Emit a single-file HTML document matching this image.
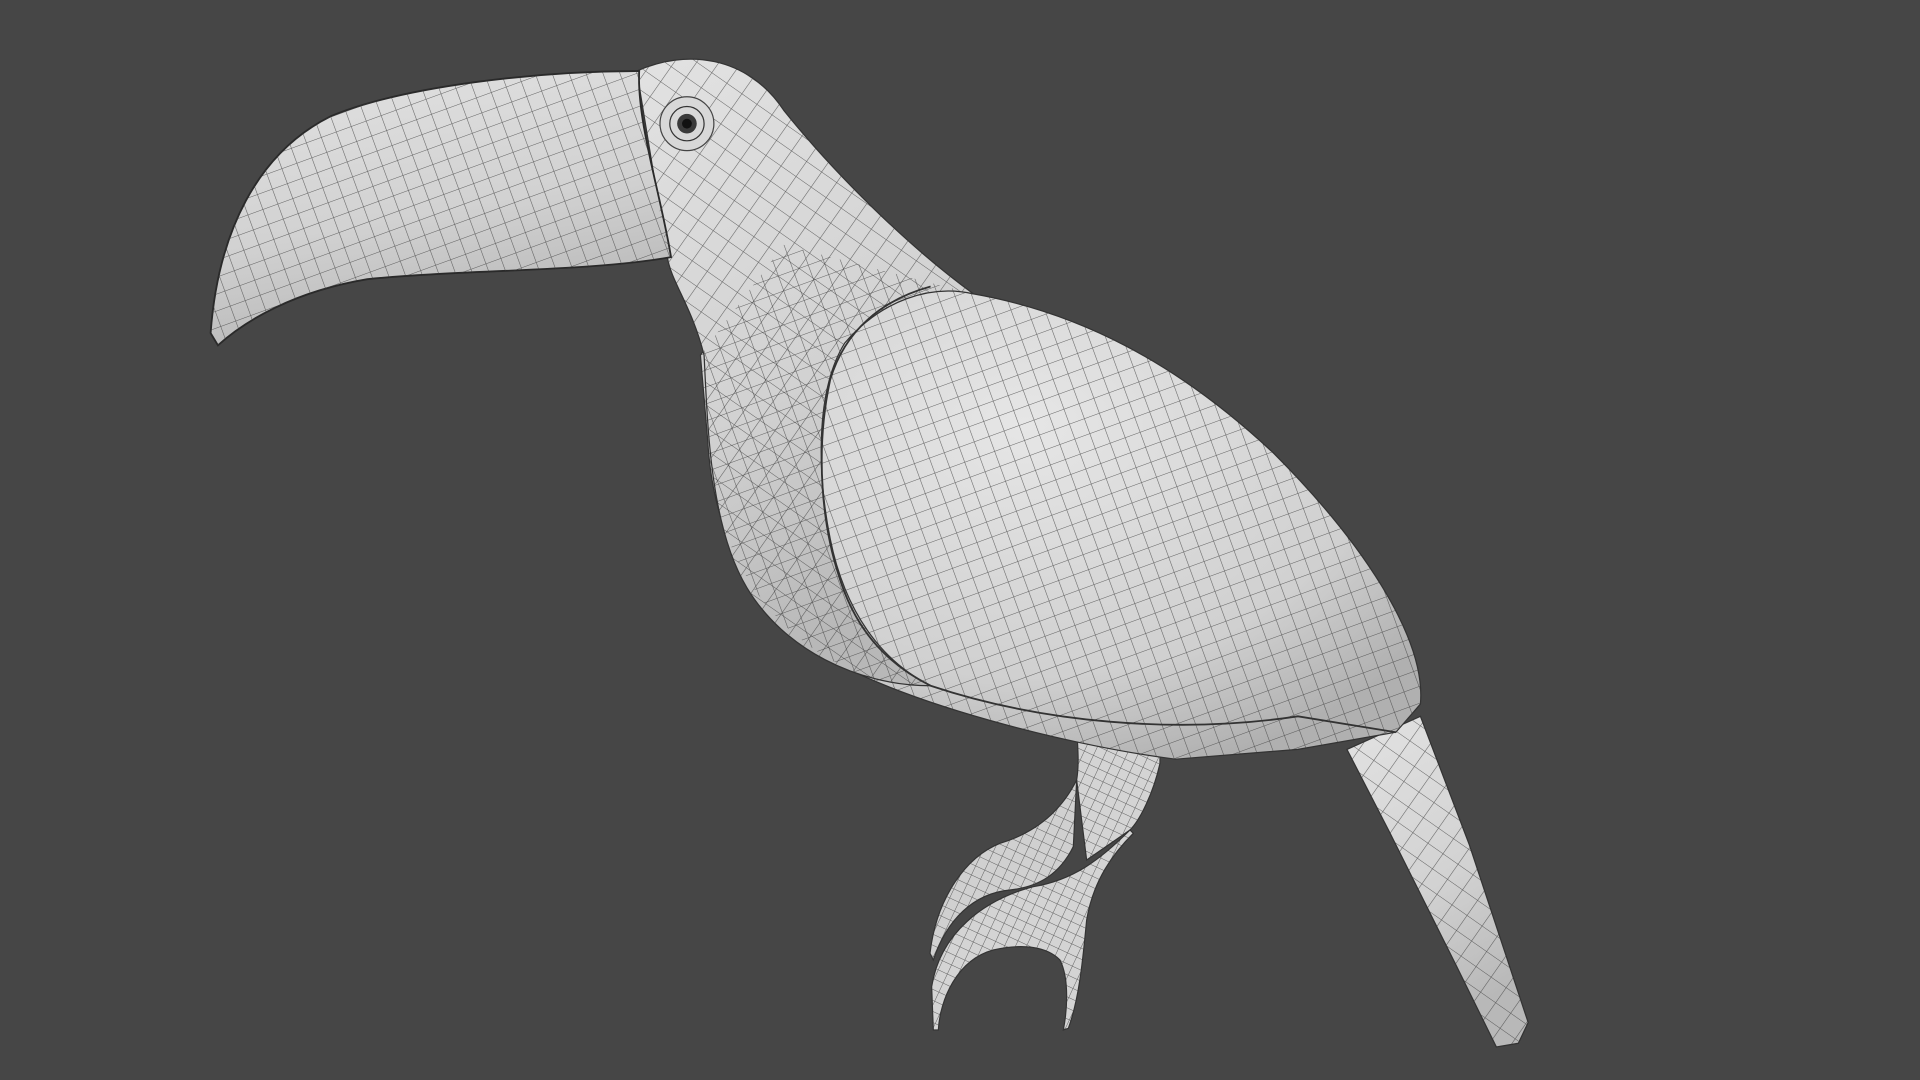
<!DOCTYPE html>
<html><head><meta charset="utf-8"><style>
html,body{margin:0;padding:0;background:#464646;overflow:hidden}
svg{display:block}
</style></head><body>
<svg width="1920" height="1080" viewBox="0 0 1568 882" preserveAspectRatio="none" xmlns="http://www.w3.org/2000/svg">
<defs>
<pattern id="g" width="13" height="13" patternUnits="userSpaceOnUse" patternTransform="rotate(-20)">
<path d="M0 0H13M0 0V13" stroke="#3a3a3a" stroke-width="0.9" fill="none" opacity="0.75"/>
</pattern>
<pattern id="g2" width="15" height="15" patternUnits="userSpaceOnUse" patternTransform="rotate(35)">
<path d="M0 0H15M0 0V15" stroke="#3a3a3a" stroke-width="0.9" fill="none" opacity="0.75"/>
</pattern>
<pattern id="gf" width="30" height="30" patternUnits="userSpaceOnUse" patternTransform="rotate(25)">
<path d="M0 0H30M0 0V30" stroke="#3a3a3a" stroke-width="3" fill="none" opacity="0.75"/>
</pattern>
<linearGradient id="sh" x1="0" y1="0" x2="0.3" y2="1">
<stop offset="0" stop-color="#e2e2e2"/><stop offset="0.6" stop-color="#d2d2d2"/><stop offset="1" stop-color="#b8b8b8"/>
</linearGradient>
<radialGradient id="bs" cx="0.45" cy="0.35" r="0.7">
<stop offset="0" stop-color="#e6e6e6"/><stop offset="0.7" stop-color="#d0d0d0"/><stop offset="1" stop-color="#b0b0b0"/>
</radialGradient>
</defs>
<rect width="1568" height="882" fill="#464646"/>
<!-- tail -->
<path d="M1100 612 L1160 585 L1200 690 L1248 835 L1240 852 L1222 855 L1190 790 L1135 680 Z" fill="url(#sh)" stroke="#333" stroke-width="1"/>
<path d="M1100 612 L1160 585 L1200 690 L1248 835 L1240 852 L1222 855 L1190 790 L1135 680 Z" fill="url(#g2)"/>
<!-- foot -->
<g transform="translate(735,588) scale(0.2722)" stroke="#333" stroke-width="3.5">
<path d="M530 0 L780 0 L780 130 C760 220 720 300 690 330 L560 420 L530 180 C540 120 530 60 530 0 Z" fill="#d4d4d4"/>
<path d="M530 180 C480 280 400 340 300 370 C200 410 110 530 90 700 L100 720 C140 600 220 520 330 510 C420 500 480 460 520 380 Z" fill="#d0d0d0"/>
<path d="M690 330 C600 420 520 480 400 500 C250 540 120 640 95 800 L100 930 L115 930 C120 840 170 720 280 690 C370 670 440 680 480 720 C510 780 500 880 490 930 L505 925 C540 830 550 700 560 600 C580 480 640 400 700 340 Z" fill="#d4d4d4"/>
<g stroke="none" fill="url(#gf)">
<path d="M530 0 L780 0 L780 130 C760 220 720 300 690 330 L560 420 L530 180 C540 120 530 60 530 0 Z"/>
<path d="M530 180 C480 280 400 340 300 370 C200 410 110 530 90 700 L100 720 C140 600 220 520 330 510 C420 500 480 460 520 380 Z"/>
<path d="M690 330 C600 420 520 480 400 500 C250 540 120 640 95 800 L100 930 L115 930 C120 840 170 720 280 690 C370 670 440 680 480 720 C510 780 500 880 490 930 L505 925 C540 830 550 700 560 600 C580 480 640 400 700 340 Z"/>
</g>
</g>
<!-- body -->
<path d="M795 240 C880 255 960 295 1040 370 C1110 440 1165 520 1160 575 L1140 598 L1060 612 L960 620 C880 610 760 580 690 545 C610 505 582 430 578 360 L572 290 L640 200 Z" fill="url(#bs)" stroke="#333" stroke-width="1"/>
<!-- neck/head -->
<path d="M520 58 C560 40 610 45 640 90 C680 140 740 200 795 240 C760 232 720 245 690 280 C665 320 668 390 678 440 C690 500 720 540 760 560 C700 560 640 530 610 480 C580 430 578 350 575 290 C565 250 548 230 545 210 Z" fill="url(#sh)" stroke="#333" stroke-width="1"/>
<!-- beak -->
<path d="M522 58 C440 58 330 70 270 95 C210 125 178 190 172 272 L178 282 C200 262 240 238 300 228 C380 220 480 222 548 210 C540 160 520 100 522 58 Z" fill="url(#sh)" stroke="#2a2a2a" stroke-width="1.5"/>
<g>
<path d="M522 58 C440 58 330 70 270 95 C210 125 178 190 172 272 L178 282 C200 262 240 238 300 228 C380 220 480 222 548 210 C540 160 520 100 522 58 Z" fill="url(#g)"/>
<path d="M520 58 C560 40 610 45 640 90 C680 140 740 200 795 240 C760 232 720 245 690 280 C665 320 668 390 678 440 C690 500 720 540 760 560 C700 560 640 530 610 480 C580 430 578 350 575 290 C565 250 548 230 545 210 Z" fill="url(#g2)"/>
<path d="M795 240 C880 255 960 295 1040 370 C1110 440 1165 520 1160 575 L1140 598 L1060 612 L960 620 C880 610 760 580 690 545 C610 505 582 430 578 360 L572 290 L640 200 Z" fill="url(#g)"/>
</g>
<path d="M760 234 C720 245 690 270 678 310 C665 370 672 430 685 470 C700 520 730 545 760 560 C850 590 960 600 1060 585 L1140 598" fill="none" stroke="#333" stroke-width="1.5"/>
<!-- eye -->
<circle cx="561" cy="101" r="22" fill="#d8d8d8" stroke="#444" stroke-width="1"/>
<circle cx="561" cy="101" r="14" fill="none" stroke="#333" stroke-width="1"/>
<circle cx="561" cy="101" r="8" fill="#3a3a3a"/>
<circle cx="561" cy="101" r="4" fill="#111"/>
</svg>
</body></html>
